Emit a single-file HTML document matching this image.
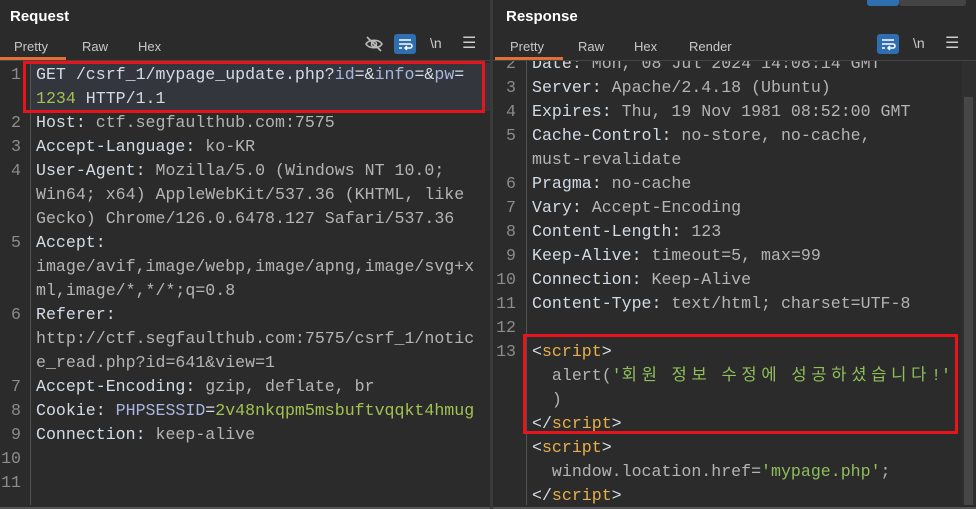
<!DOCTYPE html>
<html><head><meta charset="utf-8"><style>
*{margin:0;padding:0;box-sizing:border-box}
body{width:976px;height:509px;background:#2b2b2b;position:relative;overflow:hidden;font-family:"Liberation Sans",sans-serif;color:#ddd}
.title{position:absolute;top:8px;font-weight:bold;font-size:15px;color:#fff}
.tab{position:absolute;top:39px;font-size:13px;color:#c8c8c8}
.ul{position:absolute;top:57px;height:3px;background:#e0703a}
.sep{position:absolute;left:0;right:0;top:60px;height:1px;background:#444}
.ed{position:absolute;top:61px;bottom:4px;overflow:hidden}
.ln{position:absolute;left:0;width:30px;text-align:right;padding-right:9px;color:#8c8c8c}
.code,.ln{font-family:"Liberation Mono","Noto Sans CJK KR",monospace;font-size:16.6px;line-height:24px;white-space:pre}
.gut{position:absolute;top:0;bottom:0;width:1px;background:#555}
.code{position:absolute;top:0}
.k{color:#d3dbe4}.v{color:#b4b4b4}.b{color:#a9b7e0}.g{color:#a3c251}.o{color:#e8b04a}.s{color:#8fbf5a}
.h{letter-spacing:4.7px}
.box{position:absolute;border:3px solid #e8141c}
.ico{position:absolute;top:35px;font-size:14px;color:#ccc}
.wrap{position:absolute;top:34px;width:22px;height:20px;background:#2f6fb0;border-radius:3px}
</style></head><body>
<div class="title" style="left:10px">Request</div>
<div class="tab" style="left:14px">Pretty</div><div class="tab" style="left:82px">Raw</div><div class="tab" style="left:138px">Hex</div>
<div class="ul" style="left:0;width:66px"></div>
<svg style="position:absolute;left:364px;top:35px" width="20" height="18" viewBox="0 0 20 18" fill="none" stroke="#bbb" stroke-width="1.6"><path d="M2 9c3-5 13-5 16 0c-3 5-13 5-16 0z"/><circle cx="10" cy="9" r="2.5"/><path d="M3 2l14 14"/></svg>
<div class="wrap" style="left:394px"><svg width="22" height="20" viewBox="0 0 22 20" fill="none" stroke="#fff" stroke-width="1.5"><path d="M5 6h12M5 10h11a2 2 0 010 4h-5M13 12l-2 2 2 2M5 14h3"/></svg></div>
<div class="ico" style="left:430px">\n</div>
<div class="ico" style="left:462px;font-size:16px;top:33px">☰</div>
<div class="sep" style="right:486px"></div>
<div class="ed" style="left:0;width:490px">
 <div style="position:absolute;left:31px;top:2px;width:460px;height:48px;background:#33373d"></div>
 <div class="gut" style="left:30px"></div>
 <div class="ln" style="top:2px">1<br><br>2<br>3<br>4<br><br><br>5<br><br><br>6<br><br><br>7<br>8<br>9<br>10<br>11</div>
 <div class="code" style="left:36px;top:2px"><span class="k">GET /csrf_1/mypage_update.php?</span><span class="b">id</span><span class="k">=&amp;</span><span class="b">info</span><span class="k">=&amp;</span><span class="b">pw</span><span class="k">=</span>
<span class="g">1234</span><span class="k"> HTTP/1.1</span>
<span class="k">Host: </span><span class="v">ctf.segfaulthub.com:7575</span>
<span class="k">Accept-Language: </span><span class="v">ko-KR</span>
<span class="k">User-Agent: </span><span class="v">Mozilla/5.0 (Windows NT 10.0;</span>
<span class="v">Win64; x64) AppleWebKit/537.36 (KHTML, like</span>
<span class="v">Gecko) Chrome/126.0.6478.127 Safari/537.36</span>
<span class="k">Accept:</span>
<span class="v">image/avif,image/webp,image/apng,image/svg+x</span>
<span class="v">ml,image/*,*/*;q=0.8</span>
<span class="k">Referer:</span>
<span class="v">http://ctf.segfaulthub.com:7575/csrf_1/notic</span>
<span class="v">e_read.php?id=641&amp;view=1</span>
<span class="k">Accept-Encoding: </span><span class="v">gzip, deflate, br</span>
<span class="k">Cookie: </span><span class="b">PHPSESSID</span><span class="k">=</span><span class="g">2v48nkqpm5msbuftvqqkt4hmug</span>
<span class="k">Connection: </span><span class="v">keep-alive</span></div>
</div>
<div class="box" style="left:23px;top:61px;width:462px;height:52px"></div>
<div style="position:absolute;left:0;right:486px;bottom:0;height:2px;background:#555"></div>
<div style="position:absolute;left:490px;top:0;width:3px;height:509px;background:#3a3a3a"></div>
<div style="position:absolute;left:867px;top:0;width:32px;height:6px;background:#2f6fb0;border-radius:0 0 3px 3px"></div>
<div style="position:absolute;left:899px;top:0;width:67px;height:6px;background:#444;border-radius:0 0 3px 3px"></div>
<div class="title" style="left:506px">Response</div>
<div class="tab" style="left:510px">Pretty</div><div class="tab" style="left:578px">Raw</div><div class="tab" style="left:634px">Hex</div><div class="tab" style="left:689px">Render</div>
<div class="ul" style="left:495px;width:68px"></div>
<div class="wrap" style="left:877px"><svg width="22" height="20" viewBox="0 0 22 20" fill="none" stroke="#fff" stroke-width="1.5"><path d="M5 6h12M5 10h11a2 2 0 010 4h-5M13 12l-2 2 2 2M5 14h3"/></svg></div>
<div class="ico" style="left:913px">\n</div>
<div class="ico" style="left:945px;font-size:16px;top:33px">☰</div>
<div class="sep" style="left:493px"></div>
<div class="ed" style="left:493px;width:483px">
 <div class="gut" style="left:33px"></div>
 <div class="ln" style="top:-9px;width:32px">2<br>3<br>4<br>5<br><br>6<br>7<br>8<br>9<br>10<br>11<br>12<br>13</div>
 <div class="code" style="left:39px;top:-9px"><span class="k">Date: </span><span class="v">Mon, 08 Jul 2024 14:08:14 GMT</span>
<span class="k">Server: </span><span class="v">Apache/2.4.18 (Ubuntu)</span>
<span class="k">Expires: </span><span class="v">Thu, 19 Nov 1981 08:52:00 GMT</span>
<span class="k">Cache-Control: </span><span class="v">no-store, no-cache,</span>
<span class="v">must-revalidate</span>
<span class="k">Pragma: </span><span class="v">no-cache</span>
<span class="k">Vary: </span><span class="v">Accept-Encoding</span>
<span class="k">Content-Length: </span><span class="v">123</span>
<span class="k">Keep-Alive: </span><span class="v">timeout=5, max=99</span>
<span class="k">Connection: </span><span class="v">Keep-Alive</span>
<span class="k">Content-Type: </span><span class="v">text/html; charset=UTF-8</span>

<span class="k">&lt;</span><span class="o">script</span><span class="k">&gt;</span>
<span class="v">  alert(</span><span class="s">'<span class="h">회원</span> <span class="h">정보</span> <span class="h">수정에</span> <span class="h">성공하셨습니다</span>!'</span>
<span class="v">  )</span>
<span class="k">&lt;/</span><span class="o">script</span><span class="k">&gt;</span>
<span class="k">&lt;</span><span class="o">script</span><span class="k">&gt;</span>
<span class="v">  window.location.href=</span><span class="s">'mypage.php'</span><span class="v">;</span>
<span class="k">&lt;/</span><span class="o">script</span><span class="k">&gt;</span></div>
 <div style="position:absolute;right:0;top:0;bottom:0;width:14px;background:#2f2f2f"></div>
 <div style="position:absolute;right:3px;top:36px;width:9px;height:410px;background:#474747"></div>
</div>
<div class="box" style="left:523px;top:334px;width:435px;height:100px"></div>
<div style="position:absolute;left:493px;right:0;bottom:0;height:2px;background:#555"></div>
</body></html>
